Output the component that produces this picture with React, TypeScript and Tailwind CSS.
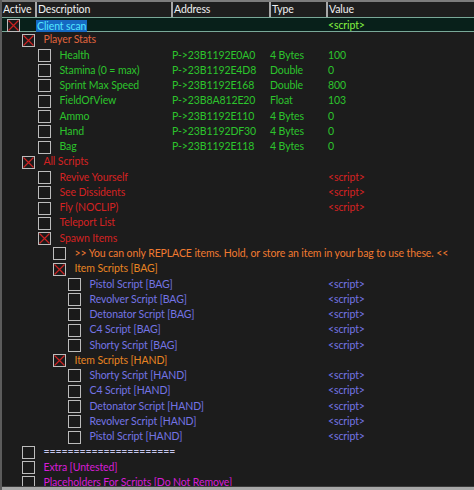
import React from "react";

type Row = {
  level: number;
  text: string;
  color: string;
  checked?: boolean;
  addr?: string;
  type?: string;
  value?: string;
  valueColor?: string;
  selected?: boolean;
};

const GREEN = "text-[#2cc42c]";
const ORANGE1 = "text-[#e0643c]";
const RED = "text-[#d42222]";
const ORANGE2 = "text-[#f07a30]";
const ORANGE3 = "text-[#e88422]";
const BLUE = "text-[#7474e4]";
const LAV = "text-[#c8c8f0]";
const MAG = "text-[#d61cd6]";

const rows: Row[] = [
  { level: 0, text: "Client scan", color: "", checked: true, value: "<script>", valueColor: "text-[#84f040]", selected: true },
  { level: 1, text: "Player Stats", color: ORANGE1, checked: true },
  { level: 2, text: "Health", color: GREEN, addr: "P->23B1192E0A0", type: "4 Bytes", value: "100", valueColor: GREEN },
  { level: 2, text: "Stamina (0 = max)", color: GREEN, addr: "P->23B1192E4D8", type: "Double", value: "0", valueColor: GREEN },
  { level: 2, text: "Sprint Max Speed", color: GREEN, addr: "P->23B1192E168", type: "Double", value: "800", valueColor: GREEN },
  { level: 2, text: "FieldOfView", color: GREEN, addr: "P->23B8A812E20", type: "Float", value: "103", valueColor: GREEN },
  { level: 2, text: "Ammo", color: GREEN, addr: "P->23B1192E110", type: "4 Bytes", value: "0", valueColor: GREEN },
  { level: 2, text: "Hand", color: GREEN, addr: "P->23B1192DF30", type: "4 Bytes", value: "0", valueColor: GREEN },
  { level: 2, text: "Bag", color: GREEN, addr: "P->23B1192E118", type: "4 Bytes", value: "0", valueColor: GREEN },
  { level: 1, text: "All Scripts", color: RED, checked: true },
  { level: 2, text: "Revive Yourself", color: RED, value: "<script>", valueColor: RED },
  { level: 2, text: "See Dissidents", color: RED, value: "<script>", valueColor: RED },
  { level: 2, text: "Fly (NOCLIP)", color: RED, value: "<script>", valueColor: RED },
  { level: 2, text: "Teleport List", color: RED },
  { level: 2, text: "Spawn Items", color: RED, checked: true },
  { level: 3, text: ">> You can only REPLACE items. Hold, or store an item in your bag to use these. <<", color: ORANGE2 },
  { level: 3, text: "Item Scripts [BAG]", color: ORANGE3, checked: true },
  { level: 4, text: "Pistol Script [BAG]", color: BLUE, value: "<script>", valueColor: BLUE },
  { level: 4, text: "Revolver Script [BAG]", color: BLUE, value: "<script>", valueColor: BLUE },
  { level: 4, text: "Detonator Script [BAG]", color: BLUE, value: "<script>", valueColor: BLUE },
  { level: 4, text: "C4 Script [BAG]", color: BLUE, value: "<script>", valueColor: BLUE },
  { level: 4, text: "Shorty Script [BAG]", color: BLUE, value: "<script>", valueColor: BLUE },
  { level: 3, text: "Item Scripts [HAND]", color: ORANGE3, checked: true },
  { level: 4, text: "Shorty Script [HAND]", color: BLUE, value: "<script>", valueColor: BLUE },
  { level: 4, text: "C4 Script [HAND]", color: BLUE, value: "<script>", valueColor: BLUE },
  { level: 4, text: "Detonator Script [HAND]", color: BLUE, value: "<script>", valueColor: BLUE },
  { level: 4, text: "Revolver Script [HAND]", color: BLUE, value: "<script>", valueColor: BLUE },
  { level: 4, text: "Pistol Script [HAND]", color: BLUE, value: "<script>", valueColor: BLUE },
  { level: 1, text: "======================", color: LAV },
  { level: 1, text: "Extra [Untested]", color: MAG },
  { level: 1, text: "Placeholders For Scripts [Do Not Remove]", color: MAG },
];

const levelPad: Record<number, string> = {
  0: "pl-[5px]",
  1: "pl-[20px]",
  2: "pl-[36px]",
  3: "pl-[51px]",
  4: "pl-[66px]",
};

function Check({ checked }: { checked?: boolean }) {
  return (
    <div className="w-[13px] h-[13px] shrink-0 border border-[#bcbcbc] bg-[#1a1a1a] relative">
      {checked && (
        <svg className="absolute inset-0" width="11" height="11" viewBox="0 0 11 11">
          <path d="M0.5 0.5 L10.5 10.5 M10.5 0.5 L0.5 10.5" stroke="#cc2222" strokeWidth="1.2" />
        </svg>
      )}
    </div>
  );
}

export default function App() {
  return (
    <div
      className="w-[474px] h-[490px] bg-[#1c1c1c] flex flex-col overflow-hidden border-l-2 border-[#5c5c5c] text-[10.5px] tracking-[-0.1px]"
      style={{ fontFamily: "Lato, 'Liberation Sans', sans-serif" }}
    >
      <div className="h-[17px] shrink-0 border-t-2 border-[#7c7c7c] bg-[#1e1e1e] grid grid-cols-[33px_136px_98px_57px_1fr] text-[#f0f0f0] items-stretch">
        <div className="flex items-center pl-[1px]">Active</div>
        <div className="flex items-center pl-[1px] border-l-2 border-[#a8a8a8]">Description</div>
        <div className="flex items-center pl-[1px] border-l-2 border-[#a8a8a8]">Address</div>
        <div className="flex items-center pl-[1px] border-l-2 border-[#a8a8a8]">Type</div>
        <div className="flex items-center pl-[1px] border-l-2 border-[#a8a8a8]">Value</div>
      </div>
      <div className="h-[469px] shrink-0 overflow-hidden">
        {rows.map((r, i) => (
          <div
            key={i}
            className={
              r.selected
                ? "grid grid-cols-[170px_98px_57px_1fr] h-[15.27px] items-center bg-[#08201a] border-y border-[#79a898]"
                : "grid grid-cols-[170px_98px_57px_1fr] h-[15.27px] items-center"
            }
          >
            <div className={"flex items-center whitespace-nowrap overflow-visible " + levelPad[r.level]}>
              <Check checked={r.checked} />
              {r.level === 0 ? (
                <span className="ml-[16px] px-[1px] bg-[#1669c2] text-[#52e6ff] leading-[12px]">{r.text}</span>
              ) : (
                <span className={"ml-[8.5px] " + r.color}>{r.text}</span>
              )}
            </div>
            <div className={"whitespace-nowrap " + GREEN}>{r.addr ?? ""}</div>
            <div className={"whitespace-nowrap " + GREEN}>{r.type ?? ""}</div>
            <div className={"whitespace-nowrap pl-[1px] " + (r.valueColor ?? "")}>{r.value ?? ""}</div>
          </div>
        ))}
      </div>
      <div className="h-[4px] shrink-0 bg-[#a8a8a8] border-t border-[#3a3a3a]" />
    </div>
  );
}
